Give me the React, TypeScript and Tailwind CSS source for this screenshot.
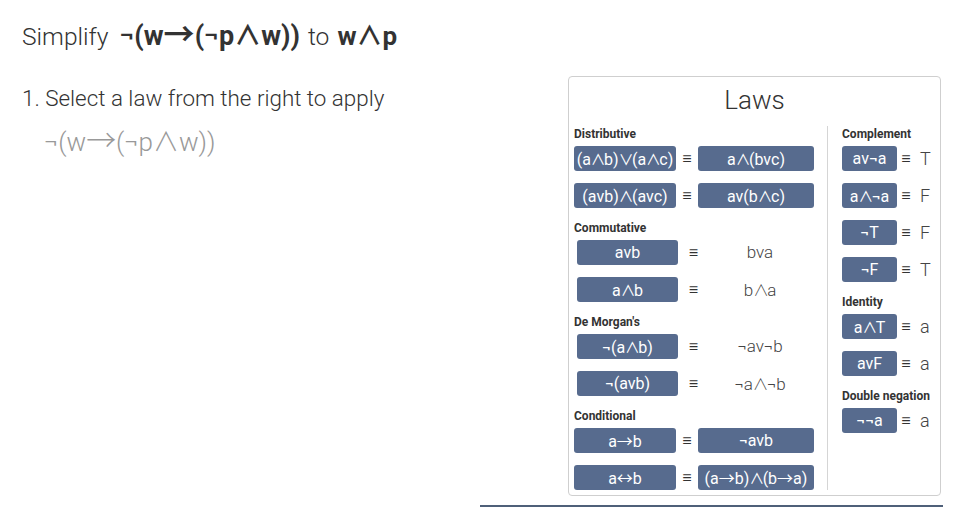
import React from "react";

const F = "font-['Roboto','Liberation_Sans','DejaVu_Sans',sans-serif]";

function S({ t, big }: { t: string; big?: boolean }) {
  const parts = t.split(/([∧∨→↔])/);
  return (
    <>
      {parts.map((p, i) => {
        if (p === "∧" || p === "∨")
          return (
            <span key={i} className={`font-['Noto_Sans_CJK_JP',sans-serif] ${big ? "" : "text-[0.92em] tracking-[-0.1em]"}`}>
              {p}
            </span>
          );
        if (p === "→" || p === "↔")
          return (
            <span key={i} className={`font-['Noto_Sans_CJK_JP',sans-serif] ${big ? "text-[1.15em] leading-[0]" : ""}`}>
              {p}
            </span>
          );
        return <React.Fragment key={i}>{p}</React.Fragment>;
      })}
    </>
  );
}

function Btn({ t, w }: { t: string; w: string }) {
  return (
    <div className={`${w} h-[25px] rounded-[3px] bg-[#576b8e] text-white text-[16px] leading-[25px] text-center whitespace-nowrap overflow-hidden`}>
      <S t={t} />
    </div>
  );
}

function Eq() {
  return <div className="text-center text-[16px] leading-[25px] text-[#333] font-['Liberation_Sans',sans-serif]">≡</div>;
}

function Label({ children }: { children: React.ReactNode }) {
  return <div className="text-[12px] leading-[16px] font-bold text-[#333] whitespace-nowrap">{children}</div>;
}

function SectionA({ title, rows }: { title: string; rows: [string, string][] }) {
  return (
    <div className="flex flex-col gap-[4px]">
      <Label>{title}</Label>
      <div className="grid grid-cols-[102px_22px_116px] gap-y-[12px] items-center">
        {rows.map(([l, r]) => (
          <React.Fragment key={l}>
            <Btn t={l} w="w-[102px]" />
            <Eq />
            <Btn t={r} w="w-[116px]" />
          </React.Fragment>
        ))}
      </div>
    </div>
  );
}

function SectionB({ title, rows }: { title: string; rows: [string, string][] }) {
  return (
    <div className="flex flex-col gap-[4px]">
      <Label>{title}</Label>
      <div className="pl-[3px] grid grid-cols-[101px_31px_102px] gap-y-[12px] items-center">
        {rows.map(([l, r]) => (
          <React.Fragment key={l}>
            <Btn t={l} w="w-[101px]" />
            <Eq />
            <div className="h-[25px] text-center text-[17px] leading-[25px] font-light text-[#444] whitespace-nowrap">
              <S t={r} />
            </div>
          </React.Fragment>
        ))}
      </div>
    </div>
  );
}

function SectionR({ title, rows }: { title: string; rows: [string, string][] }) {
  return (
    <div className="flex flex-col gap-[4px]">
      <Label>{title}</Label>
      <div className="flex flex-col gap-[12px]">
        {rows.map(([l, r]) => (
          <div key={l} className="flex items-center">
            <Btn t={l} w="w-[55px]" />
            <div className="w-[18px]">
              <Eq />
            </div>
            <div className="ml-[5px] text-[18px] leading-[25px] font-light text-[#444]">{r}</div>
          </div>
        ))}
      </div>
    </div>
  );
}

export default function App() {
  return (
    <div className={`${F} w-[967px] h-[508px] overflow-hidden bg-white text-[#333]`}>
      <div className="pl-[22px] pt-[18px] h-[50px] text-[24.6px] leading-[32px] font-light whitespace-nowrap">
        Simplify{" "}
        <span className="ml-[5px] mr-[2px] font-bold text-[27px] text-[#333]">
          <S t="¬(w→(¬p∧w))" big />
        </span>{" "}
        to{" "}
        <span className="ml-[2px] font-bold text-[26px] text-[#333]">
          <S t="w∧p" big />
        </span>
      </div>
      <div className="mt-[26px] pl-[22px] flex items-start">
        <div className="w-[546px] pt-[8px]">
          <div className="h-[28px] text-[22.4px] leading-[28px] font-light text-[#333] whitespace-nowrap">
            1. Select a law from the right to apply
          </div>
          <div className="mt-[12px] h-[32px] pl-[22px] text-[26px] leading-[32px] font-light text-[#999] whitespace-nowrap">
            <S t="¬(w→(¬p∧w))" big />
          </div>
        </div>
        <div className="w-[373px] border border-[#cfcfcf] rounded-[4px] pt-[7px] pb-[5px]">
          <div className="text-center text-[26px] leading-[32px] font-light text-[#333]">Laws</div>
          <div className="mt-[10px] flex">
            <div className="w-[258px] pl-[5px] flex flex-col gap-[12px]">
              <SectionA
                title="Distributive"
                rows={[
                  ["(a∧b)∨(a∧c)", "a∧(bvc)"],
                  ["(avb)∧(avc)", "av(b∧c)"],
                ]}
              />
              <SectionB
                title="Commutative"
                rows={[
                  ["avb", "bva"],
                  ["a∧b", "b∧a"],
                ]}
              />
              <SectionB
                title="De Morgan's"
                rows={[
                  ["¬(a∧b)", "¬av¬b"],
                  ["¬(avb)", "¬a∧¬b"],
                ]}
              />
              <SectionA
                title="Conditional"
                rows={[
                  ["a→b", "¬avb"],
                  ["a↔b", "(a→b)∧(b→a)"],
                ]}
              />
            </div>
            <div className="flex-1 border-l border-[#d5d5d5] pl-[14px] flex flex-col gap-[12px]">
              <SectionR
                title="Complement"
                rows={[
                  ["av¬a", "T"],
                  ["a∧¬a", "F"],
                  ["¬T", "F"],
                  ["¬F", "T"],
                ]}
              />
              <SectionR
                title="Identity"
                rows={[
                  ["a∧T", "a"],
                  ["avF", "a"],
                ]}
              />
              <SectionR title="Double negation" rows={[["¬¬a", "a"]]} />
            </div>
          </div>
        </div>
      </div>
      <div className="mt-[9px] ml-[480px] w-[463px] h-[2px] bg-[#4f6079]" />
    </div>
  );
}
